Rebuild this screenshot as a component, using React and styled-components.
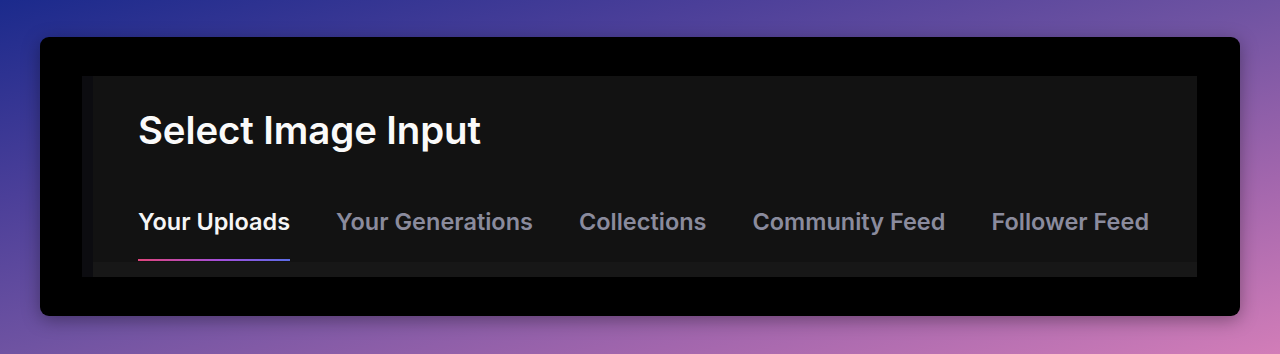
import React, { useState } from 'react';
import styled, { createGlobalStyle } from 'styled-components';

const GlobalStyle = createGlobalStyle`
  html, body {
    margin: 0;
    padding: 0;
  }
  body {
    font-family: Inter, "Noto Sans", sans-serif;
    -webkit-font-smoothing: antialiased;
  }
`;

const Backdrop = styled.div`
  width: 1280px;
  height: 354px;
  box-sizing: border-box;
  padding: 37px 40px 38px;
  background: linear-gradient(to bottom right, #1b2a8c 0%, #4b3f99 28%, #6f53a2 50%, #a266ad 75%, #d27db8 100%);
`;

const Card = styled.div`
  height: 100%;
  box-sizing: border-box;
  background: #000;
  border-radius: 9px;
  box-shadow: 0 4px 18px rgba(0, 0, 0, 0.35);
  padding: 39px 43px 39px 42px;
`;

const Panel = styled.div`
  height: 100%;
  display: flex;
  background: #121212;
  border-left: 11px solid #0c0c10;
`;

const PanelBody = styled.div`
  flex: 1;
  display: flex;
  flex-direction: column;
`;

const Header = styled.div`
  flex: 1;
  display: flex;
  flex-direction: column;
  justify-content: space-between;
  padding: 32px 40px 0 45px;
`;

const Title = styled.h2`
  margin: 0;
  font-size: 38.4px;
  line-height: 44px;
  font-weight: 600;
  color: #fafafa;
  letter-spacing: -0.1px;
`;

const Tabs = styled.nav`
  display: flex;
  gap: 46px;
`;

const Tab = styled.button`
  position: relative;
  flex-shrink: 0;
  white-space: nowrap;
  border: 0;
  background: none;
  padding: 0 0 26px;
  font-family: inherit;
  font-size: 23.5px;
  line-height: 28px;
  font-weight: 600;
  color: ${p => (p.$active ? '#f5f5f5' : '#8a8b9d')};
  cursor: pointer;

  &::after {
    content: '';
    display: ${p => (p.$active ? 'block' : 'none')};
    position: absolute;
    left: 0;
    right: 0;
    bottom: 1px;
    height: 2px;
    background: linear-gradient(90deg, #e0457c, #a24fdc 55%, #5b6ce6);
  }
`;

const Footer = styled.div`
  height: 15px;
  background: #171717;
`;

const tabs = ['Your Uploads', 'Your Generations', 'Collections', 'Community Feed', 'Follower Feed'];

export default function App() {
  const [active, setActive] = useState(0);

  return (
    <>
      <GlobalStyle />
      <Backdrop>
        <Card>
          <Panel>
            <PanelBody>
              <Header>
                <Title>Select Image Input</Title>
                <Tabs>
                  {tabs.map((t, i) => (
                    <Tab key={t} $active={i === active} onClick={() => setActive(i)}>
                      {t}
                    </Tab>
                  ))}
                </Tabs>
              </Header>
              <Footer />
            </PanelBody>
          </Panel>
        </Card>
      </Backdrop>
    </>
  );
}
